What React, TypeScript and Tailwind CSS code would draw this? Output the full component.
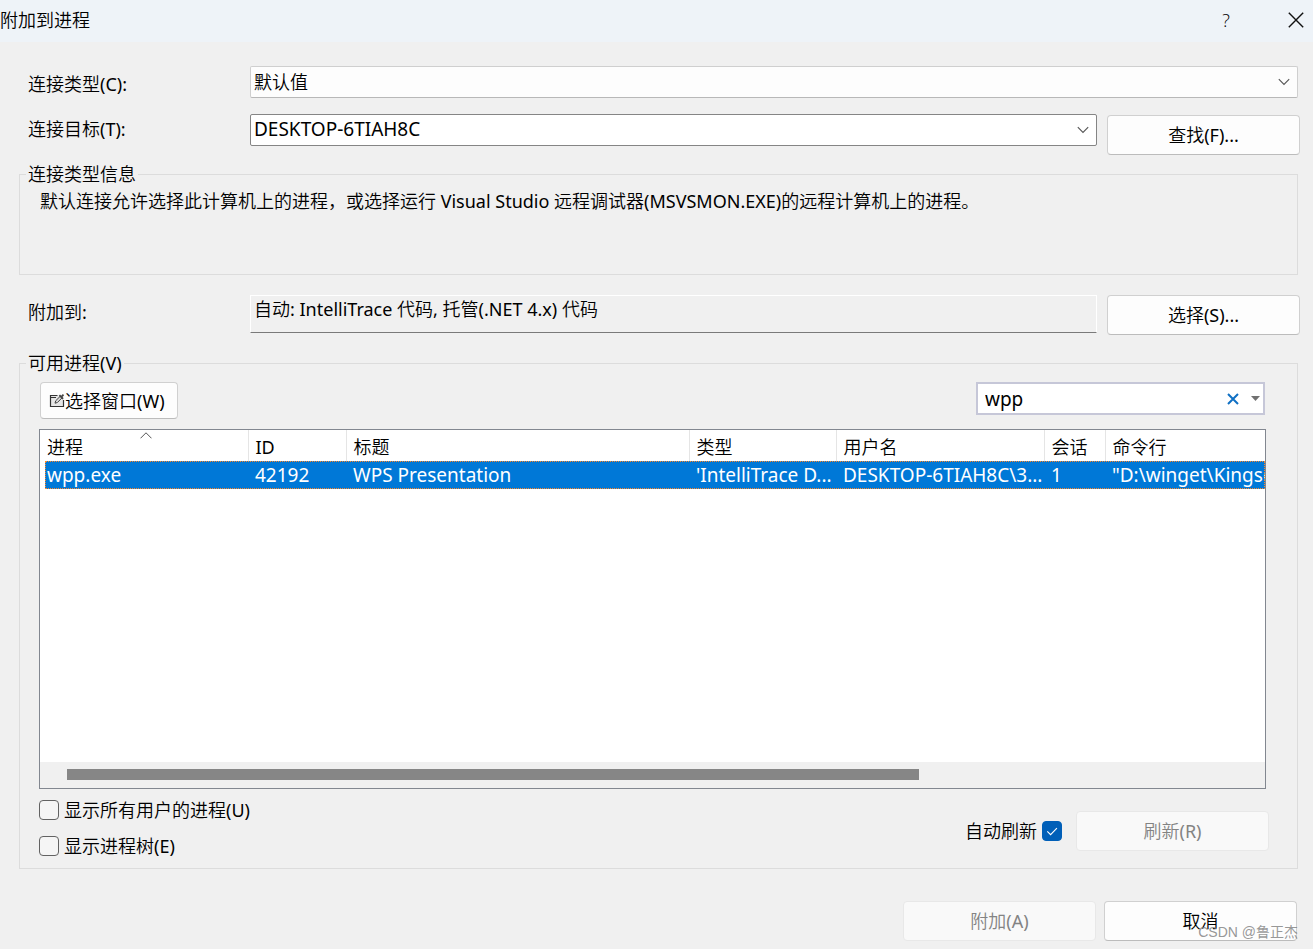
import type { ReactNode } from "react";

const columns = [
  { label: "进程", width: "w-[203px]" },
  { label: "ID", width: "w-[98px]" },
  { label: "标题", width: "w-[343px]" },
  { label: "类型", width: "w-[147px]" },
  { label: "用户名", width: "w-[208px]" },
  { label: "会话", width: "w-[61px]" },
  { label: "命令行", width: "" },
];

const processes = [
  ["wpp.exe", "42192", "WPS Presentation", "'IntelliTrace D...", "DESKTOP-6TIAH8C\\3...", "1", "\"D:\\winget\\Kingso"],
];

function ChevronDown() {
  return (
    <svg className="pointer-events-none absolute top-1/2 right-2 -translate-y-1/2" width="12" height="8" viewBox="0 0 12 8" fill="none" stroke="#555" strokeWidth="1.1" aria-hidden="true">
      <path d="M0.8 1.2 6 6.4 11.2 1.2" />
    </svg>
  );
}

function PushButton({ children, disabled = false }: { children: ReactNode; disabled?: boolean }) {
  return (
    <button
      type="button"
      disabled={disabled}
      className="h-10 w-[193px] shrink-0 rounded border border-[#d0d0d0] border-b-[#bcbcbc] bg-[#fdfdfd] disabled:border-[#e8e8e8] disabled:bg-[#f9f9f9] disabled:text-[#838383]"
    >
      {children}
    </button>
  );
}

function CheckBox({ id, checked = false }: { id: string; checked?: boolean }) {
  return (
    <span className="relative flex size-5 shrink-0">
      <input
        id={id}
        type="checkbox"
        defaultChecked={checked}
        className="peer size-5 appearance-none rounded border border-[#626262] bg-[#f5f5f5] checked:border-[#005fb8] checked:bg-[#005fb8]"
      />
      <svg className="pointer-events-none absolute inset-0 hidden peer-checked:block" width="20" height="20" viewBox="0 0 20 20" fill="none" stroke="#fff" strokeWidth="1.1" aria-hidden="true">
        <path d="M5.3 10.4 8.6 13.7 14.9 7.2" />
      </svg>
    </span>
  );
}

function PickWindowIcon() {
  return (
    <svg width="16" height="16" viewBox="0 0 16 16" fill="none" aria-hidden="true">
      <path d="M1.5 2.5h13v11h-13z" fill="#e6e6e6" />
      <path d="M8.5 2.5h-7v11h13V7M1.5 4.500H7" stroke="#333" strokeWidth="1.2" />
      <path d="m6 10.2.7-2.4 4.8-4.8 1.7 1.7-4.8 4.8z" fill="#ddd" stroke="#444" />
      <path d="m10.4 2.2 3.6 3.6M12.3 3.9l2.2-2.2" stroke="#444" strokeWidth="1.8" />
    </svg>
  );
}

export default function App() {
  return (
    <div className="min-h-screen bg-[#f0f0f0] font-['Noto_Sans','Noto_Sans_CJK_SC_DemiLight','Noto_Sans_CJK_SC',sans-serif] text-[18px] leading-6 text-black">
      <header className="flex h-[42px] items-center bg-[#eef3f8] pb-[3px]">
        <h1 className="flex-1">附加到进程</h1>
        <button type="button" aria-label="帮助" className="w-8 font-['Open_Sans',sans-serif] font-light">?</button>
        <button type="button" aria-label="关闭" className="ml-[46px] flex w-[25px] items-center">
          <svg width="16" height="16" viewBox="0 0 16 16" stroke="#111" strokeWidth="1.4" aria-hidden="true">
            <path d="m.8.8 14.4 14.4M15.2.8.8 15.2" />
          </svg>
        </button>
      </header>

      <main className="pt-6 pb-2">
        <div className="flex pr-[15px] pl-7">
          <label htmlFor="connection-type" className="w-[222px] shrink-0 pt-[6px]">连接类型(C):</label>
          <div className="relative flex-1">
            <select id="connection-type" className="h-8 w-full appearance-none rounded-xs border border-[#cfcfcf] border-b-[#b8b8b8] bg-[#fdfdfd] px-[3px]">
              <option>默认值</option>
            </select>
            <ChevronDown />
          </div>
        </div>

        <div className="mt-4 flex pr-[13px] pl-7">
          <label htmlFor="connection-target" className="w-[222px] shrink-0 pt-[3px]">连接目标(T):</label>
          <div className="relative h-8 flex-1">
            <input id="connection-target" type="text" defaultValue="DESKTOP-6TIAH8C" className="h-8 w-full rounded-xs border border-[#858585] bg-white px-[3px] pb-[2px] text-[19px]" />
            <ChevronDown />
          </div>
          <div className="ml-[10px] pt-px">
            <PushButton>查找(F)...</PushButton>
          </div>
        </div>

        <fieldset className="mt-[7px] mr-[15px] ml-[19px] h-[113px] border border-[#dcdcdc] px-[6px]">
          <legend className="px-[2px]">连接类型信息</legend>
          <p className="px-[14px] pt-[3px]">默认连接允许选择此计算机上的进程，或选择运行 Visual Studio 远程调试器(MSVSMON.EXE)的远程计算机上的进程。</p>
        </fieldset>

        <div className="mt-5 flex pr-[13px] pl-7">
          <label htmlFor="attach-to" className="w-[222px] shrink-0 pt-[5px]">附加到:</label>
          <input
            id="attach-to"
            type="text"
            readOnly
            defaultValue="自动: IntelliTrace 代码, 托管(.NET 4.x) 代码"
            className="h-[38px] min-w-0 flex-1 border border-white border-b-[#7a7a7a] bg-[#f0f0f0] px-[3px] pb-3"
          />
          <div className="ml-[10px]">
            <PushButton>选择(S)...</PushButton>
          </div>
        </div>

        <fieldset className="mt-4 mr-[15px] ml-[19px] min-w-0 border border-[#dcdcdc] px-[6px] pb-[10px]">
          <legend className="px-[2px]">可用进程(V)</legend>
          <div className="pr-[26px] pl-[14px]">
            <div className="flex items-center justify-between pt-[7px]">
              <button type="button" className="flex h-[37px] items-center rounded border border-[#d0d0d0] border-b-[#bcbcbc] bg-[#fdfdfd] pr-3 pl-2">
                <PickWindowIcon />
                选择窗口(W)
              </button>
              <div className="mb-1 flex h-[33px] w-[289px] items-center border-2 border-[#c6c7d8] bg-white pr-[3px] pl-[7px]">
                <input type="text" aria-label="筛选进程" defaultValue="wpp" className="min-w-0 flex-1 text-[19px] outline-none" />
                <button type="button" aria-label="清除">
                  <svg width="12" height="12" viewBox="0 0 12 12" stroke="#1070c4" strokeWidth="2" aria-hidden="true">
                    <path d="m1 1 10 10M11 1 1 11" />
                  </svg>
                </button>
                <button type="button" aria-label="搜索选项" className="ml-3">
                  <svg width="9" height="5" viewBox="0 0 9 5" fill="#717171" aria-hidden="true">
                    <path d="M0 0h9L4.5 5z" />
                  </svg>
                </button>
              </div>
            </div>

            <div className="-mr-px -ml-px mt-[10px] flex h-[360px] flex-col border border-[#828790] bg-white">
              <div className="flex-1 overflow-hidden pl-[5px]">
                <table className="w-full table-fixed border-collapse">
                  <thead>
                    <tr className="h-[31px]">
                      {columns.map((column, index) => (
                        <th key={column.label} scope="col" className={`relative border-r border-[#e5e5e5] p-0 pt-[3px] text-left font-normal whitespace-nowrap last:border-r-0 ${index === 0 ? "pl-[2px]" : "pl-[7px]"} ${column.width}`}>
                          {column.label}
                          {index === 0 && (
                            <svg className="absolute top-[2px] left-1/2 -translate-x-1/2" width="12" height="7" viewBox="0 0 12 7" fill="none" stroke="#555" aria-hidden="true">
                              <path d="M.5 6.3 6 .8l5.5 5.5" />
                            </svg>
                          )}
                        </th>
                      ))}
                    </tr>
                  </thead>
                  <tbody>
                    {processes.map((row) => (
                      <tr key={row[1]} className="h-7 bg-[#0078d7] text-[19px] text-white outline-1 -outline-offset-1 outline-[#ff8728] outline-dotted">
                        {row.map((cell, index) => (
                          <td key={columns[index].label} className={`overflow-hidden p-0 whitespace-nowrap ${index === 0 ? "pl-[2px]" : "pl-[7px]"}`}>
                            {cell}
                          </td>
                        ))}
                      </tr>
                    ))}
                  </tbody>
                </table>
              </div>
              <div className="h-[26px] bg-[#f0f0f0] px-[27px] pt-[7px]">
                <div className="h-[11px] w-[72.8%] bg-[#868686]" />
              </div>
            </div>

            <div className="-mr-1 -ml-px flex items-start pt-[9px]">
              <div className="flex flex-1 flex-col gap-3">
                <div className="flex items-center gap-[5px]">
                  <CheckBox id="all-users" />
                  <label htmlFor="all-users">显示所有用户的进程(U)</label>
                </div>
                <div className="flex items-center gap-[5px]">
                  <CheckBox id="process-tree" />
                  <label htmlFor="process-tree">显示进程树(E)</label>
                </div>
              </div>
              <div className="flex items-center gap-[14px] pt-[13px]">
                <div className="flex items-center gap-[5px]">
                  <label htmlFor="auto-refresh">自动刷新</label>
                  <CheckBox id="auto-refresh" checked />
                </div>
                <PushButton disabled>刷新(R)</PushButton>
              </div>
            </div>
          </div>
        </fieldset>

        <div className="relative mt-8 flex justify-end gap-2 pr-4">
          <PushButton disabled>附加(A)</PushButton>
          <PushButton>取消</PushButton>
          <span className="pointer-events-none absolute right-[15px] -bottom-[3px] font-['Liberation_Sans','Noto_Sans_CJK_SC',sans-serif] text-[14px] text-[#7c7c7c]/80">CSDN @鲁正杰</span>
        </div>
      </main>
    </div>
  );
}
